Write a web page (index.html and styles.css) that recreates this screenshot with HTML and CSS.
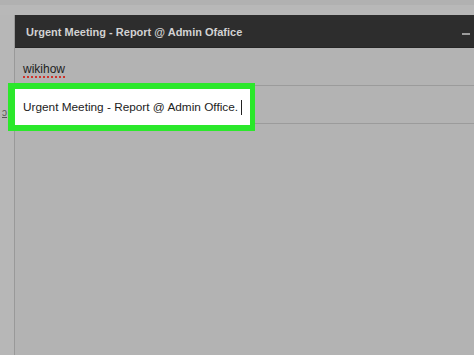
FILE: index.html
```html
<!DOCTYPE html>
<html lang="en">
<head>
    <meta charset="UTF-8">
    <meta name="viewport" content="width=device-width, initial-scale=1.0">
    <title>Compose</title>
    <link rel="stylesheet" href="styles.css">
</head>
<body>

    <div class="top-strip"></div>

    <div class="window">
        <!-- Left edge of the mail list -->
        <aside class="gutter">
            <span class="glyph">ɔ</span>
        </aside>

        <main class="compose">
            <header class="title-bar">
                <span class="title">Urgent Meeting - Report @ Admin Ofafice</span>
                <span class="minimize"></span>
            </header>

            <div class="row to-row">
                <span class="recipient">wikihow</span>
            </div>

            <div class="row subject-row">
                <!-- Highlighted subject field -->
                <div class="highlight">
                    <span class="subject">Urgent Meeting - Report @ Admin Office.</span><span class="caret"></span>
                </div>
            </div>
        </main>
    </div>

</body>
</html>
```

FILE: styles.css
```css
/* General Styles */
body {
    font-family: 'Liberation Sans', Arial, sans-serif;
    margin: 0;
    padding: 0;
    background-color: #b3b3b3;
    height: 355px;
    overflow: hidden;
}

.top-strip {
    height: 15px;
    box-sizing: border-box;
    border-top: 5px solid #b1b1b1;
    background-color: #b8b8b8;
}

.window {
    display: flex;
    height: 340px;
}

.gutter {
    width: 14px;
    flex-shrink: 0;
    background-color: #b7b7b7;
    border-right: 1px solid #999;
    position: relative;
}

.glyph {
    position: absolute;
    top: 92px;
    left: 2px;
    font-size: 10px;
    color: #555;
    text-decoration: underline;
}

.compose {
    flex: 1;
    display: flex;
    flex-direction: column;
}

/* Dark title bar */
.title-bar {
    height: 32px;
    background-color: #2d2d2d;
    border-bottom: 1px solid #262626;
    display: flex;
    align-items: center;
    justify-content: space-between;
    padding: 0 4px 0 11px;
}

.title {
    color: #d2d2d2;
    font-size: 11px;
    font-weight: bold;
    margin-top: 2px;
}

.minimize {
    width: 8px;
    height: 2px;
    margin-top: 5px;
    background-color: #9c9c9c;
}

.row {
    height: 37px;
    border-bottom: 1px solid #9b9b9b;
    display: flex;
    align-items: center;
    padding-left: 8px;
    position: relative;
}

.recipient {
    font-size: 12px;
    color: #222;
    margin-top: 4px;
    text-decoration: underline dotted #d0332b;
    text-decoration-thickness: 2px;
    text-underline-offset: 4px;
}

/* Green annotation box */
.highlight {
    position: absolute;
    left: -7px;
    top: -3px;
    box-sizing: border-box;
    width: 247px;
    height: 48px;
    border: 6px solid #2be82b;
    border-left-width: 7px;
    border-right-width: 5px;
    background-color: #fff;
    display: flex;
    align-items: center;
    padding-left: 8px;
    white-space: nowrap;
}

.subject {
    font-size: 11.8px;
    color: #222;
}

.caret {
    width: 1px;
    height: 15px;
    margin-left: 3px;
    background-color: #222;
}
```
